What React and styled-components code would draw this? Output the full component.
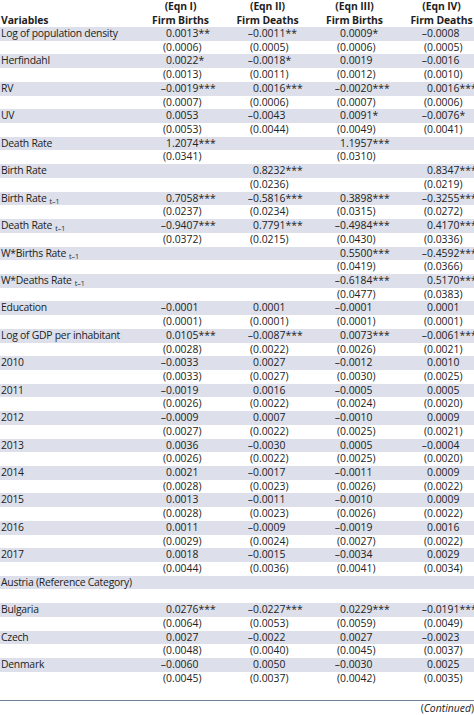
import React from 'react';
import styled, { createGlobalStyle } from 'styled-components';

const GlobalStyle = createGlobalStyle`
  html, body {
    margin: 0;
    padding: 0;
    background: #ffffff;
  }
  body {
    font-family: "Open Sans", "Noto Sans", sans-serif;
    color: #222222;
  }
`;

const rows = [
  ['Log of population density', null, ['0.0013**', '(0.0006)'], ['–0.0011**', '(0.0005)'], ['0.0009*', '(0.0006)'], ['–0.0008', '(0.0005)']],
  ['Herfindahl', null, ['0.0022*', '(0.0013)'], ['–0.0018*', '(0.0011)'], ['0.0019', '(0.0012)'], ['–0.0016', '(0.0010)']],
  ['RV', null, ['–0.0019***', '(0.0007)'], ['0.0016***', '(0.0006)'], ['–0.0020***', '(0.0007)'], ['0.0016***', '(0.0006)']],
  ['UV', null, ['0.0053', '(0.0053)'], ['–0.0043', '(0.0044)'], ['0.0091*', '(0.0049)'], ['–0.0076*', '(0.0041)']],
  ['Death Rate', null, ['1.2074***', '(0.0341)'], null, ['1.1957***', '(0.0310)'], null],
  ['Birth Rate', null, null, ['0.8232***', '(0.0236)'], null, ['0.8347***', '(0.0219)']],
  ['Birth Rate', 't–1', ['0.7058***', '(0.0237)'], ['–0.5816***', '(0.0234)'], ['0.3898***', '(0.0315)'], ['–0.3255***', '(0.0272)']],
  ['Death Rate', 't–1', ['–0.9407***', '(0.0372)'], ['0.7791***', '(0.0215)'], ['–0.4984***', '(0.0430)'], ['0.4170***', '(0.0336)']],
  ['W*Births Rate', 't–1', null, null, ['0.5500***', '(0.0419)'], ['–0.4592***', '(0.0366)']],
  ['W*Deaths Rate', 't–1', null, null, ['–0.6184***', '(0.0477)'], ['0.5170***', '(0.0383)']],
  ['Education', null, ['–0.0001', '(0.0001)'], ['0.0001', '(0.0001)'], ['–0.0001', '(0.0001)'], ['0.0001', '(0.0001)']],
  ['Log of GDP per inhabitant', null, ['0.0105***', '(0.0028)'], ['–0.0087***', '(0.0022)'], ['0.0073***', '(0.0026)'], ['–0.0061***', '(0.0021)']],
  ['2010', null, ['–0.0033', '(0.0033)'], ['0.0027', '(0.0027)'], ['–0.0012', '(0.0030)'], ['0.0010', '(0.0025)']],
  ['2011', null, ['–0.0019', '(0.0026)'], ['0.0016', '(0.0022)'], ['–0.0005', '(0.0024)'], ['0.0005', '(0.0020)']],
  ['2012', null, ['–0.0009', '(0.0027)'], ['0.0007', '(0.0022)'], ['–0.0010', '(0.0025)'], ['0.0009', '(0.0021)']],
  ['2013', null, ['0.0036', '(0.0026)'], ['–0.0030', '(0.0022)'], ['0.0005', '(0.0025)'], ['–0.0004', '(0.0020)']],
  ['2014', null, ['0.0021', '(0.0028)'], ['–0.0017', '(0.0023)'], ['–0.0011', '(0.0026)'], ['0.0009', '(0.0022)']],
  ['2015', null, ['0.0013', '(0.0028)'], ['–0.0011', '(0.0023)'], ['–0.0010', '(0.0026)'], ['0.0009', '(0.0022)']],
  ['2016', null, ['0.0011', '(0.0029)'], ['–0.0009', '(0.0024)'], ['–0.0019', '(0.0027)'], ['0.0016', '(0.0022)']],
  ['2017', null, ['0.0018', '(0.0044)'], ['–0.0015', '(0.0036)'], ['–0.0034', '(0.0041)'], ['0.0029', '(0.0034)']],
  ['Austria (Reference Category)', null, null, null, null, null],
  ['Bulgaria', null, ['0.0276***', '(0.0064)'], ['–0.0227***', '(0.0053)'], ['0.0229***', '(0.0059)'], ['–0.0191***', '(0.0049)']],
  ['Czech', null, ['0.0027', '(0.0048)'], ['–0.0022', '(0.0040)'], ['0.0027', '(0.0045)'], ['–0.0023', '(0.0037)']],
  ['Denmark', null, ['–0.0060', '(0.0045)'], ['0.0050', '(0.0037)'], ['–0.0030', '(0.0042)'], ['0.0025', '(0.0035)']],
];

const headers = [
  ['(Eqn I)', 'Firm Births'],
  ['(Eqn II)', 'Firm Deaths'],
  ['(Eqn III)', 'Firm Births'],
  ['(Eqn IV)', 'Firm Deaths'],
];

const Page = styled.div`
  width: 474px;
  height: 715px;
  overflow: hidden;
`;

const Table = styled.div`
  width: 485px;
  display: flex;
  flex-direction: column;
  font-size: 10.4px;
`;

const Row = styled.div`
  display: grid;
  grid-template-columns: 137px repeat(4, 87px);
  height: 13.73px;
  line-height: 13.73px;
  background: ${p => (p.$shaded ? '#dde0ea' : '#ffffff')};
  white-space: nowrap;
`;

const HeadRow = styled.div`
  display: grid;
  grid-template-columns: 137px repeat(4, 87px);
  height: 27px;
  font-weight: 700;
  color: #1e1e1e;
`;

const HeadCell = styled.div`
  display: flex;
  flex-direction: column;
  justify-content: flex-end;
  align-items: ${p => (p.$left ? 'flex-start' : 'center')};
  padding-left: ${p => (p.$left ? '1px' : '0')};
  line-height: 13.5px;
  letter-spacing: -0.1px;
  white-space: nowrap;
`;

const Label = styled.div`
  padding-left: 1px;
  letter-spacing: -0.25px;
`;

const Sub = styled.span`
  font-size: 7px;
  position: relative;
  top: 2px;
  margin-left: 3px;
  letter-spacing: 0;
`;

const NumCell = styled.div`
  padding-left: 29px;
`;

const Hang = styled.span`
  display: inline-block;
  width: 6px;
  margin-left: -6px;
  text-align: right;
`;

const Rule = styled.div`
  margin-top: 14px;
  height: 1px;
  background: #6f8396;
  width: 474px;
`;

const Note = styled.div`
  width: 474px;
  text-align: right;
  font-size: 10.4px;
  line-height: 13px;
  margin-top: 1px;
  color: #222222;
`;

function Num({ value }) {
  if (!value) return <NumCell />;
  const first = value[0];
  if (first === '–' || first === '(') {
    return (
      <NumCell>
        <Hang>{first}</Hang>
        {value.slice(1)}
      </NumCell>
    );
  }
  return <NumCell>{value}</NumCell>;
}

function App() {
  return (
    <Page>
      <GlobalStyle />
      <Table>
        <HeadRow>
          <HeadCell $left>Variables</HeadCell>
          {headers.map(h => (
            <HeadCell key={h[0]}>
              <div>{h[0]}</div>
              <div>{h[1]}</div>
            </HeadCell>
          ))}
        </HeadRow>
        {rows.map((r, i) => (
          <React.Fragment key={i}>
            <Row $shaded>
              <Label>
                {r[0]}
                {r[1] && <Sub>{r[1]}</Sub>}
              </Label>
              {r.slice(2).map((c, j) => (
                <Num key={j} value={c && c[0]} />
              ))}
            </Row>
            <Row>
              <Label />
              {r.slice(2).map((c, j) => (
                <Num key={j} value={c && c[1]} />
              ))}
            </Row>
          </React.Fragment>
        ))}
      </Table>
      <Rule />
      <Note>
        (<i>Continued</i>)
      </Note>
    </Page>
  );
}

export default App;
